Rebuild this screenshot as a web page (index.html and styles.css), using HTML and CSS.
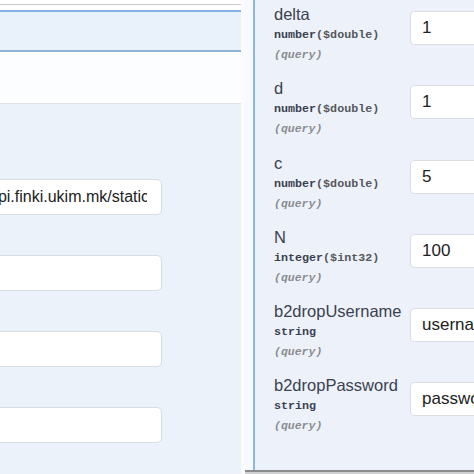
FILE: index.html
```html
<!DOCTYPE html>
<html>
<head>
<meta charset="UTF-8">
<meta name="viewport" content="width=device-width, initial-scale=1.0">
<title>Parameters</title>
<link rel="stylesheet" href="styles.css">
</head>
<body>
<div class="left">
    <div class="rule"></div>
    <div class="band"></div>
    <div class="blank"></div>
    <div class="fields">
        <div class="field"><span class="value">api.finki.ukim.mk/static/data</span></div>
        <div class="field"></div>
        <div class="field"></div>
        <div class="field"></div>
    </div>
</div>

<div class="right">
    <div class="params">
        <div class="param">
            <div class="label">
                <div class="name">delta</div>
                <div class="type">number<span class="fmt">($double)</span></div>
                <div class="in">(query)</div>
            </div>
            <div class="input">1</div>
        </div>
        <div class="param">
            <div class="label">
                <div class="name">d</div>
                <div class="type">number<span class="fmt">($double)</span></div>
                <div class="in">(query)</div>
            </div>
            <div class="input">1</div>
        </div>
        <div class="param">
            <div class="label">
                <div class="name">c</div>
                <div class="type">number<span class="fmt">($double)</span></div>
                <div class="in">(query)</div>
            </div>
            <div class="input">5</div>
        </div>
        <div class="param">
            <div class="label">
                <div class="name">N</div>
                <div class="type">integer<span class="fmt">($int32)</span></div>
                <div class="in">(query)</div>
            </div>
            <div class="input">100</div>
        </div>
        <div class="param">
            <div class="label">
                <div class="name">b2dropUsername</div>
                <div class="type">string</div>
                <div class="in">(query)</div>
            </div>
            <div class="input">username</div>
        </div>
        <div class="param">
            <div class="label">
                <div class="name">b2dropPassword</div>
                <div class="type">string</div>
                <div class="in">(query)</div>
            </div>
            <div class="input">password</div>
        </div>
    </div>
    <div class="foot"></div>
</div>
</body>
</html>
```

FILE: styles.css
```css
html, body { margin: 0; height: 474px; overflow: hidden; }
body { display: flex; gap: 4px; background: #fafbfd; font-family: "Liberation Sans", Arial, sans-serif; color: #3b4151; }

.left { width: 241px; flex: none; display: flex; flex-direction: column; background: #fff; }
.left .rule { height: 4px; border-bottom: 1px solid #c9cacc; margin-bottom: 5px; }
.left .band { height: 38px; background: #e9f2fb; border-top: 2px solid #80b2e2; border-bottom: 2px solid #8fb4d4; }
.left .blank { height: 51px; background: #fbfdff; border-bottom: 1px solid #dde2e8; }
.left .fields { flex: 1; background: #ecf2fa; padding-top: 75px; display: flex; flex-direction: column; gap: 40px; overflow: hidden; }
.left .field { margin-left: -40px; width: 200px; height: 34px; box-sizing: content-box; background: #fff; border: 1px solid #d9dde2; border-radius: 5px; overflow: hidden; }
.left .value { display: block; font-size: 16px; line-height: 34px; white-space: nowrap; margin-left: 28px; width: 158px; overflow: hidden; color: #222; }

.right { flex: 1; display: flex; flex-direction: column; background: #f7f9fc; min-width: 0; }
.params { flex: 1; margin-left: 8px; border-left: 2px solid #8bb7e4; background: #edf2fa; padding: 3px 0 0 19px; display: flex; flex-direction: column; gap: 13.3px; overflow: hidden; }
.foot { height: 2px; border-top: 2px solid #8a8b8d; background: #cfd0d2; }

.param { display: flex; }
.label { width: 136px; flex: none; }
.name { font-size: 16.5px; line-height: 22px; }
.type { font-family: "Liberation Mono", "Courier New", monospace; font-weight: bold; font-size: 11.7px; line-height: 20px; }
.type .fmt { color: #55575c; }
.in { font-family: "Liberation Mono", "Courier New", monospace; font-style: italic; font-weight: bold; font-size: 11.5px; line-height: 19px; color: #8a8c90; }
.input { margin-top: 8px; width: 120px; height: 32px; flex: none; background: #fff; border: 1px solid #dadde2; border-radius: 4px; padding-left: 11px; font-size: 17px; line-height: 32px; color: #222; white-space: nowrap; overflow: hidden; }
```
